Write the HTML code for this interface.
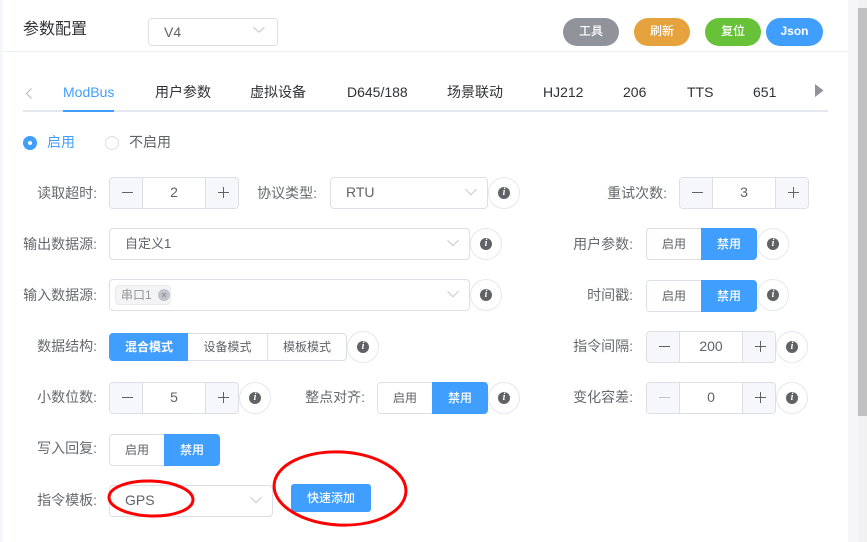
<!DOCTYPE html>
<html>
<head>
<meta charset="utf-8">
<style>
html,body{margin:0;padding:0;width:867px;height:542px;overflow:hidden;background:#f5f6fa}
body{position:relative;font-family:"Liberation Sans","Noto Sans CJK SC",sans-serif;font-size:13px;color:#606266}
div{box-sizing:border-box}
.a{position:absolute;white-space:nowrap}
.card{position:absolute;left:3px;top:-4px;width:845px;height:560px;background:#fff;border-radius:4px}
.hr{position:absolute;left:3px;top:51px;width:845px;height:1px;background:#ebeef5}
.btn{position:absolute;top:18px;height:28px;border-radius:14px;color:#fff;font-size:12px;font-weight:500;text-align:center;line-height:27px}
.tab{position:absolute;top:83px;font-size:14px;line-height:18px;color:#303133;white-space:nowrap}
.lb{position:absolute;width:100px;text-align:right;font-size:14px;line-height:32px;height:32px;color:#66696e;white-space:nowrap}
.box{position:absolute;height:32px;border:1px solid #dcdfe6;border-radius:4px;background:#fff}
.val{position:absolute;left:15px;top:0;line-height:29px;font-size:13px;color:#606266;white-space:nowrap}
.chev{position:absolute;top:10px;width:12px;height:8px}
.num{position:absolute;width:130px;height:32px;border:1px solid #dcdfe6;border-radius:4px;background:#fff;overflow:hidden}
.num i{position:absolute;top:0;width:33px;height:30px;background:#f5f7fa;display:block}
.num i.m{left:0;border-right:1px solid #dcdfe6;box-sizing:border-box}
.num i.p{right:0;border-left:1px solid #dcdfe6;box-sizing:border-box}
.num i svg{position:absolute;left:12px;top:8px}
.num i.p svg{top:9px}
.num span{position:absolute;left:33px;right:33px;top:0;text-align:center;line-height:29px;font-size:14px;color:#606266}
.info{position:absolute;width:32px;height:32px;border:1px solid #e4e7ed;border-radius:50%;background:#fff}
.info b{position:absolute;left:9px;top:9px;width:12px;height:12px;border-radius:50%;background:#606266;color:#fff;font:italic bold 10px/12px "Liberation Serif",serif;text-align:center}
.seg{position:absolute;height:32px;font-size:12px;text-align:center;line-height:31px;white-space:nowrap;border:1px solid #dcdfe6;background:#fff;color:#606266}
.on{background:#409eff;border-color:#409eff;color:#fff;font-weight:500}
</style>
</head>
<body>
<div class="card"></div>
<div class="hr"></div>

<div class="a" style="left:858px;top:0;width:9px;height:542px;background:#f1f1f1"></div>
<div class="a" style="left:858px;top:8px;width:9px;height:408px;background:#c1c1c1"></div>

<div class="a" style="left:23px;top:20px;font-size:16px;line-height:20px;color:#303133">参数配置</div>
<div class="box" style="left:148px;top:18px;width:130px;height:28px"><div class="val" style="left:15px;line-height:26px;font-size:14px">V4</div>
<svg class="chev" style="left:104px;top:7px" viewBox="0 0 12 8"><path d="M.5 1.200 6 6.200l5.500-5" fill="none" stroke="#c0c4cc" stroke-width="1"/></svg></div>

<div class="btn" style="left:563px;width:56px;background:#909399">工具</div>
<div class="btn" style="left:634px;width:56px;background:#e6a23c">刷新</div>
<div class="btn" style="left:705px;width:56px;background:#67c23a">复位</div>
<div class="btn" style="left:766px;width:57px;background:#409eff;font-weight:bold">Json</div>

<svg class="a" style="left:25px;top:88px" width="8" height="11" viewBox="0 0 8 11"><path d="M6.500.5 1.500 5.500l5 5" fill="none" stroke="#b4b7bd" stroke-width="1"/></svg>
<div class="tab" style="left:63px;color:#409eff">ModBus</div>
<div class="tab" style="left:155px">用户参数</div>
<div class="tab" style="left:250px">虚拟设备</div>
<div class="tab" style="left:347px">D645/188</div>
<div class="tab" style="left:447px">场景联动</div>
<div class="tab" style="left:543px">HJ212</div>
<div class="tab" style="left:623px">206</div>
<div class="tab" style="left:687px">TTS</div>
<div class="tab" style="left:753px">651</div>
<svg class="a" style="left:815px;top:84px" width="9" height="13" viewBox="0 0 9 13"><path d="M0 0l8.500 6.500L0 13z" fill="#909399"/></svg>
<div class="a" style="left:23px;top:110px;width:805px;height:2px;background:#e4e7ed"></div>
<div class="a" style="left:63px;top:110px;width:51px;height:2px;background:#409eff"></div>

<div class="a" style="left:23px;top:136px;width:14px;height:14px;border-radius:50%;background:#409eff"></div>
<div class="a" style="left:28px;top:141px;width:4px;height:4px;border-radius:50%;background:#fff"></div>
<div class="a" style="left:47px;top:133px;font-size:14px;line-height:18px;color:#409eff">启用</div>
<div class="a" style="left:105px;top:136px;width:14px;height:14px;border-radius:50%;border:1px solid #dcdfe6;background:#fff"></div>
<div class="a" style="left:129px;top:133px;font-size:14px;line-height:18px;color:#606266">不启用</div>

<!-- row 1 -->
<div class="lb" style="left:-3px;top:177px">读取超时:</div>
<div class="num" style="left:109px;top:177px"><i class="m"><svg width="11" height="11"><path d="M0 6.500h11" stroke="#606266"/></svg></i><span>2</span><i class="p"><svg width="11" height="11"><path d="M0 5.500h11M5.500 0v11" stroke="#606266"/></svg></i></div>
<div class="lb" style="left:217px;top:177px">协议类型:</div>
<div class="box" style="left:330px;top:177px;width:158px"><div class="val" style="font-size:14px">RTU</div><svg class="chev" style="left:134px" viewBox="0 0 12 8"><path d="M.5 1.200 6 6.700l5.500-5.500" fill="none" stroke="#c0c4cc"/></svg></div>
<div class="info" style="left:488px;top:177px"><b>i</b></div>
<div class="lb" style="left:567px;top:177px">重试次数:</div>
<div class="num" style="left:679px;top:177px"><i class="m"><svg width="11" height="11"><path d="M0 6.500h11" stroke="#606266"/></svg></i><span>3</span><i class="p"><svg width="11" height="11"><path d="M0 5.500h11M5.500 0v11" stroke="#606266"/></svg></i></div>

<!-- row 2 -->
<div class="lb" style="left:-3px;top:228px">输出数据源:</div>
<div class="box" style="left:109px;top:228px;width:361px"><div class="val" style="font-size:13px">自定义1</div><svg class="chev" style="left:337px" viewBox="0 0 12 8"><path d="M.5 1.200 6 6.700l5.500-5.500" fill="none" stroke="#c0c4cc"/></svg></div>
<div class="info" style="left:470px;top:228px"><b>i</b></div>
<div class="lb" style="left:533px;top:228px">用户参数:</div>
<div class="seg" style="left:646px;top:228px;width:56px;border-radius:4px 0 0 4px">启用</div>
<div class="seg on" style="left:701px;top:228px;width:56px;border-radius:0 4px 4px 0">禁用</div>
<div class="info" style="left:757px;top:228px"><b>i</b></div>

<!-- row 3 -->
<div class="lb" style="left:-3px;top:279px">输入数据源:</div>
<div class="box" style="left:109px;top:279px;width:361px"><svg class="chev" style="left:337px" viewBox="0 0 12 8"><path d="M.5 1.200 6 6.700l5.500-5.500" fill="none" stroke="#c0c4cc"/></svg></div>
<div class="a" style="left:115px;top:285px;width:56px;height:20px;background:#f4f4f5;border:1px solid #e9e9eb;border-radius:4px;font-size:12px;line-height:18px;color:#909399;padding-left:5px">串口1</div>
<div class="a" style="left:158px;top:289px;width:12px;height:12px;border-radius:50%;background:#c0c4cc"></div>
<svg class="a" style="left:158px;top:289px" width="12" height="12"><path d="M4 4l4 4M8 4l-4 4" stroke="#909399"/></svg>
<div class="info" style="left:470px;top:279px"><b>i</b></div>
<div class="lb" style="left:533px;top:279px">时间戳:</div>
<div class="seg" style="left:646px;top:280px;width:56px;border-radius:4px 0 0 4px">启用</div>
<div class="seg on" style="left:701px;top:280px;width:56px;border-radius:0 4px 4px 0">禁用</div>
<div class="info" style="left:757px;top:279px"><b>i</b></div>

<!-- row 4 -->
<div class="lb" style="left:-3px;top:330px">数据结构:</div>
<div class="seg on" style="left:109px;top:333px;width:80px;height:28px;line-height:26px;border-radius:4px 0 0 4px;font-weight:bold">混合模式</div>
<div class="seg" style="left:188px;top:333px;width:80px;height:28px;line-height:26px;border-left:0">设备模式</div>
<div class="seg" style="left:267px;top:333px;width:80px;height:28px;line-height:26px;border-radius:0 4px 4px 0">模板模式</div>
<div class="info" style="left:347px;top:331px"><b>i</b></div>
<div class="lb" style="left:533px;top:330px">指令间隔:</div>
<div class="num" style="left:646px;top:331px"><i class="m"><svg width="11" height="11"><path d="M0 6.500h11" stroke="#606266"/></svg></i><span>200</span><i class="p"><svg width="11" height="11"><path d="M0 5.500h11M5.500 0v11" stroke="#606266"/></svg></i></div>
<div class="info" style="left:776px;top:331px"><b>i</b></div>

<!-- row 5 -->
<div class="lb" style="left:-3px;top:381px">小数位数:</div>
<div class="num" style="left:109px;top:382px"><i class="m"><svg width="11" height="11"><path d="M0 6.500h11" stroke="#606266"/></svg></i><span>5</span><i class="p"><svg width="11" height="11"><path d="M0 5.500h11M5.500 0v11" stroke="#606266"/></svg></i></div>
<div class="info" style="left:239px;top:382px"><b>i</b></div>
<div class="lb" style="left:265px;top:381px">整点对齐:</div>
<div class="seg" style="left:377px;top:382px;width:56px;border-radius:4px 0 0 4px">启用</div>
<div class="seg on" style="left:432px;top:382px;width:56px;border-radius:0 4px 4px 0">禁用</div>
<div class="info" style="left:488px;top:382px"><b>i</b></div>
<div class="lb" style="left:533px;top:381px">变化容差:</div>
<div class="num" style="left:646px;top:382px"><i class="m"><svg width="11" height="11"><path d="M0 6.500h11" stroke="#c0c4cc"/></svg></i><span>0</span><i class="p"><svg width="11" height="11"><path d="M0 5.500h11M5.500 0v11" stroke="#606266"/></svg></i></div>
<div class="info" style="left:776px;top:382px"><b>i</b></div>

<!-- row 6 -->
<div class="lb" style="left:-3px;top:432px">写入回复:</div>
<div class="seg" style="left:109px;top:434px;width:56px;border-radius:4px 0 0 4px">启用</div>
<div class="seg on" style="left:164px;top:434px;width:56px;border-radius:0 4px 4px 0">禁用</div>

<!-- row 7 -->
<div class="lb" style="left:-3px;top:484px">指令模板:</div>
<div class="box" style="left:109px;top:485px;width:164px"><div class="val" style="font-size:14px">GPS</div><svg class="chev" style="left:140px" viewBox="0 0 12 8"><path d="M.5 1.200 6 6.700l5.500-5.500" fill="none" stroke="#c0c4cc"/></svg></div>
<div class="a" style="left:291px;top:484px;width:80px;height:28px;background:#409eff;border-radius:3px;color:#fff;font-size:12px;font-weight:500;text-align:center;line-height:28px">快速添加</div>

<svg class="a" style="left:0;top:0" width="867" height="542">
<ellipse cx="151" cy="498.500" rx="42" ry="17.500" fill="none" stroke="#f00" stroke-width="3" transform="rotate(2 151 498.500)"/>
<ellipse cx="340" cy="488.500" rx="66" ry="36.500" fill="none" stroke="#f00" stroke-width="3" transform="rotate(3 340 488.500)"/>
</svg>
</body>
</html>
